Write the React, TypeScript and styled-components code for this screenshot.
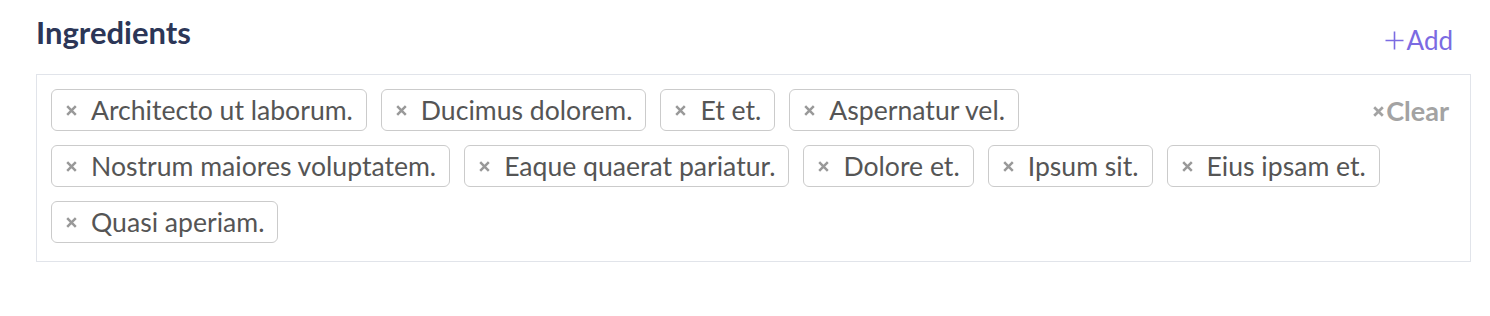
import React from "react";
import styled, { createGlobalStyle } from "styled-components";

const GlobalStyle = createGlobalStyle`
  html, body {
    margin: 0;
    padding: 0;
    background: #ffffff;
  }
  body {
    font-family: Lato, "Liberation Sans", sans-serif;
  }
`;

const Wrapper = styled.div`
  margin: 0 19px 0 36px;
`;

const Header = styled.div`
  display: flex;
  justify-content: space-between;
  align-items: flex-start;
  height: 74px;
  box-sizing: border-box;
  padding-top: 14px;
`;

const Title = styled.h2`
  margin: 0;
  font-family: Lato, sans-serif;
  font-weight: 700;
  font-size: 31px;
  line-height: 36px;
  color: #2c3657;
`;

const AddButton = styled.button`
  display: flex;
  align-items: center;
  gap: 3px;
  margin: 10px 18px 0 0;
  padding: 0;
  border: none;
  background: none;
  font-family: Lato, sans-serif;
  font-size: 26px;
  line-height: 32px;
  color: #7b6be2;
  cursor: pointer;
`;

const Box = styled.div`
  position: relative;
  border: 1px solid #e1e4ea;
  padding: 14px 60px 18px 14px;
`;

const ChipList = styled.div`
  display: flex;
  flex-wrap: wrap;
  gap: 14px 14px;
`;

const Chip = styled.div`
  display: flex;
  align-items: center;
  gap: 14px;
  height: 42px;
  box-sizing: border-box;
  padding: 0 13px 0 14px;
  border: 1px solid #cbcbcb;
  border-radius: 6px;
  font-family: Lato, sans-serif;
  font-size: 26.6px;
  color: #555555;
  white-space: nowrap;
`;

const RemoveIcon = styled.svg`
  width: 11px;
  height: 11px;
  flex: none;
`;

const ClearButton = styled.button`
  position: absolute;
  top: 14px;
  right: 21px;
  display: flex;
  align-items: center;
  gap: 2px;
  height: 42px;
  padding: 0;
  border: none;
  background: none;
  font-family: Lato, sans-serif;
  font-weight: 700;
  font-size: 27px;
  color: #a3a3a3;
  cursor: pointer;
`;

const ClearX = styled.svg`
  width: 11px;
  height: 11px;
  margin-top: 2px;
`;

const PlusIcon = styled.svg`
  width: 19px;
  height: 19px;
`;

const items = [
  "Architecto ut laborum.",
  "Ducimus dolorem.",
  "Et et.",
  "Aspernatur vel.",
  "Nostrum maiores voluptatem.",
  "Eaque quaerat pariatur.",
  "Dolore et.",
  "Ipsum sit.",
  "Eius ipsam et.",
  "Quasi aperiam.",
];

const Cross = ({ color, weight }: { color: string; weight: number }) => (
  <path
    d="M1.2 1.2 L9.8 9.8 M9.8 1.2 L1.2 9.8"
    stroke={color}
    strokeWidth={weight}
    strokeLinecap="butt"
    fill="none"
  />
);

export default function App() {
  return (
    <>
      <GlobalStyle />
      <Wrapper>
        <Header>
          <Title>Ingredients</Title>
          <AddButton type="button">
            <PlusIcon viewBox="0 0 19 19">
              <path d="M9.5 0.5 V18.5 M0.5 9.5 H18.5" stroke="#7b6be2" strokeWidth="1.6" fill="none" />
            </PlusIcon>
            Add
          </AddButton>
        </Header>
        <Box>
          <ChipList>
            {items.map((item) => (
              <Chip key={item}>
                <RemoveIcon viewBox="0 0 11 11">
                  <Cross color="#999999" weight={2.5} />
                </RemoveIcon>
                {item}
              </Chip>
            ))}
          </ChipList>
          <ClearButton type="button">
            <ClearX viewBox="0 0 11 11">
              <Cross color="#a3a3a3" weight={2.7} />
            </ClearX>
            Clear
          </ClearButton>
        </Box>
      </Wrapper>
    </>
  );
}
